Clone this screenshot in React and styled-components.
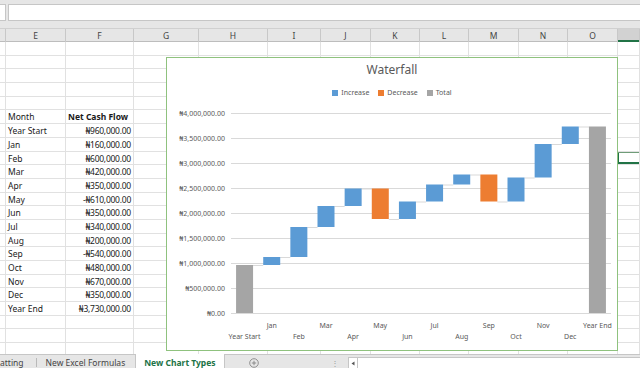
import React from 'react';
import styled, { createGlobalStyle } from 'styled-components';

const GlobalStyle = createGlobalStyle`
  html, body {
    margin: 0;
    padding: 0;
    background: #ffffff;
  }
  body {
    font-family: "Noto Sans", "Open Sans", sans-serif;
  }
`;

const COLUMNS = [
  { name: 'D', width: '6px' },
  { name: 'E', width: '60px' },
  { name: 'F', width: '68px' },
  { name: 'G', width: '65px' },
  { name: 'H', width: '69px' },
  { name: 'I', width: '53px' },
  { name: 'J', width: '50px' },
  { name: 'K', width: '49px' },
  { name: 'L', width: '49px' },
  { name: 'M', width: '50px' },
  { name: 'N', width: '49px' },
  { name: 'O', width: '50px' },
  { name: 'P', width: '1fr' },
];
const GRID = COLUMNS.map(c => c.width).join(' ');

const ROW_COUNT = 23;
const TABLE_ROW = 5;
const SELECTED_ROW = 8;

const FLOWS = [
  { label: 'Year Start', value: 960000, total: true },
  { label: 'Jan', value: 160000 },
  { label: 'Feb', value: 600000 },
  { label: 'Mar', value: 420000 },
  { label: 'Apr', value: 350000 },
  { label: 'May', value: -610000 },
  { label: 'Jun', value: 350000 },
  { label: 'Jul', value: 340000 },
  { label: 'Aug', value: 200000 },
  { label: 'Sep', value: -540000 },
  { label: 'Oct', value: 480000 },
  { label: 'Nov', value: 670000 },
  { label: 'Dec', value: 350000 },
  { label: 'Year End', value: 3730000, total: true },
];

const COLORS = {
  increase: '#5b9bd5',
  decrease: '#ed7d31',
  total: '#a5a5a5',
};

const naira = v =>
  (v < 0 ? '-' : '') +
  '₦' +
  Math.abs(v).toLocaleString('en-US', { minimumFractionDigits: 2, maximumFractionDigits: 2 });

// chart geometry, in svg units
const PLOT_LEFT = 64;
const PLOT_RIGHT = 444;
const ZERO_Y = 215;
const BAR_W = 17;
const STEP = (PLOT_RIGHT - PLOT_LEFT) / FLOWS.length;
const yOf = v => ZERO_Y - v / 20000;
const TICKS = [0, 500000, 1000000, 1500000, 2000000, 2500000, 3000000, 3500000, 4000000];

let running = 0;
const BARS = FLOWS.map((f, i) => {
  let from, to, kind;
  if (f.total) {
    from = 0;
    to = f.value;
    running = f.value;
    kind = 'total';
  } else {
    from = running;
    to = running + f.value;
    running = to;
    kind = f.value >= 0 ? 'increase' : 'decrease';
  }
  return {
    ...f,
    kind,
    end: running,
    x: PLOT_LEFT + i * STEP + (STEP - BAR_W) / 2,
    top: yOf(Math.max(from, to)),
    height: Math.abs(to - from) / 20000,
  };
});

const Window = styled.div`
  width: 640px;
  height: 368px;
  overflow: hidden;
  display: flex;
  flex-direction: column;
  background: #ffffff;
`;

const FormulaArea = styled.div`
  height: 28px;
  flex: none;
  box-sizing: border-box;
  padding-top: 4px;
  display: flex;
  align-items: flex-start;
  gap: 2px;
  background: #e6e6e6;
`;

const NameStub = styled.div`
  width: 6px;
  height: 17px;
  box-sizing: border-box;
  background: #ffffff;
  border: 1px solid #c6c6c6;
  border-left: none;
`;

const FormulaInput = styled.div`
  flex: 1;
  height: 17px;
  box-sizing: border-box;
  background: #ffffff;
  border: 1px solid #c6c6c6;
  border-right: none;
`;

const HeaderRow = styled.div`
  height: 14px;
  flex: none;
  box-sizing: border-box;
  display: grid;
  grid-template-columns: ${GRID};
  background: #e6e6e6;
  border-top: 1px solid #d0d0d0;
  border-bottom: 1px solid #bdbdbd;
`;

const ColHeader = styled.div`
  box-sizing: border-box;
  border-right: 1px solid #c8c8c8;
  font-size: 8.5px;
  line-height: 13px;
  color: #444444;
  text-align: center;
  background: ${p => (p.$selected ? '#d2d2d2' : 'transparent')};
  box-shadow: ${p => (p.$selected ? 'inset 0 -2px 0 #217346' : 'none')};
`;

const Sheet = styled.div`
  position: relative;
  flex: 1;
  overflow: hidden;
`;

const Row = styled.div`
  height: 13.7px;
  display: grid;
  grid-template-columns: ${GRID};
`;

const Cell = styled.div`
  box-sizing: border-box;
  border-right: 1px solid #e1e1e1;
  border-bottom: 1px solid #e1e1e1;
  padding: 1px ${p => (p.$align === 'right' ? '2px' : '1px')} 0 ${p => (p.$align === 'right' ? '0' : '2px')};
  font-size: 8.5px;
  line-height: 12.7px;
  color: #1a1a1a;
  white-space: nowrap;
  overflow: hidden;
  text-align: ${p => p.$align || 'left'};
  font-weight: ${p => (p.$bold ? 700 : 400)};
  letter-spacing: ${p => (p.$numeric ? '-0.25px' : '0')};
  box-shadow: ${p => (p.$selected ? 'inset 0 1px 0 #6f9c78, inset 0 -2px 0 #217346, inset 1px 0 0 #217346' : 'none')};
`;

const ChartBox = styled.div`
  position: absolute;
  left: 166px;
  top: 15px;
  width: 452px;
  height: 294px;
  box-sizing: border-box;
  border: 1px solid #8fc27e;
  background: #ffffff;
  display: flex;
  flex-direction: column;
`;

const ChartTitle = styled.div`
  margin-top: 4px;
  font-size: 12px;
  line-height: 16px;
  color: #595959;
  text-align: center;
`;

const Legend = styled.div`
  margin-top: 10px;
  height: 10px;
  display: flex;
  justify-content: center;
  align-items: center;
  gap: 9px;
`;

const LegendItem = styled.div`
  display: flex;
  align-items: center;
  gap: 3px;
  font-size: 7px;
  line-height: 10px;
  color: #595959;
`;

const Swatch = styled.span`
  width: 6px;
  height: 6px;
  background: ${p => p.$color};
`;

const Plot = styled.svg`
  display: block;
  flex: none;
  font-family: "Noto Sans", "Open Sans", sans-serif;
`;

const TabBar = styled.div`
  height: 14px;
  flex: none;
  box-sizing: border-box;
  display: flex;
  align-items: stretch;
  background: #e6e6e6;
  border-top: 1px solid #c6c6c6;
  font-size: 8.5px;
  color: #444444;
`;

const Tab = styled.div`
  display: flex;
  align-items: center;
  padding-top: 2px;
  white-space: nowrap;
  padding-right: ${p => p.$right || 10}px;
  padding-left: ${p => p.$left || 0}px;
  margin-top: ${p => (p.$active ? '-1px' : '0')};
  background: ${p => (p.$active ? '#ffffff' : 'transparent')};
  color: ${p => (p.$active ? '#217346' : '#444444')};
  font-weight: ${p => (p.$active ? 700 : 400)};
  border-left: ${p => (p.$active ? '1px solid #c6c6c6' : 'none')};
  border-right: ${p => (p.$active ? '1px solid #c6c6c6' : 'none')};
`;

const TabDivider = styled.span`
  width: 1px;
  height: 9px;
  align-self: center;
  margin-top: 2px;
  background: #b9b9b9;
`;

const AddSheet = styled.svg`
  align-self: center;
  margin-top: 2px;
  margin-left: 24px;
`;

const Dots = styled.span`
  align-self: center;
  margin-top: 2px;
  margin-left: 72px;
  font-size: 8px;
  line-height: 10px;
  color: #9a9a9a;
`;

const ScrollArrow = styled.div`
  margin-left: 9px;
  margin-top: 2px;
  width: 10px;
  box-sizing: border-box;
  background: #ffffff;
  border: 1px solid #c6c6c6;
  border-bottom: none;
  display: flex;
  align-items: center;
  justify-content: center;
`;

const ScrollTrack = styled.div`
  flex: 1;
  margin-top: 2px;
  background: #ffffff;
  border-top: 1px solid #c6c6c6;
`;

function cellFor(r, col) {
  const item = r === TABLE_ROW ? null : FLOWS[r - TABLE_ROW - 1];
  if (r === TABLE_ROW) {
    if (col === 'E') return { text: 'Month' };
    if (col === 'F') return { text: 'Net Cash Flow', bold: true };
  } else if (item) {
    if (col === 'E') return { text: item.label };
    if (col === 'F') return { text: naira(item.value), align: 'right', numeric: true };
  }
  return { text: null };
}

function WaterfallChart() {
  return (
    <ChartBox>
      <ChartTitle>Waterfall</ChartTitle>
      <Legend>
        <LegendItem><Swatch $color={COLORS.increase} />Increase</LegendItem>
        <LegendItem><Swatch $color={COLORS.decrease} />Decrease</LegendItem>
        <LegendItem><Swatch $color={COLORS.total} />Total</LegendItem>
      </Legend>
      <Plot width="450" height="252" viewBox="0 0 450 252">
        {TICKS.map(t => (
          <g key={t}>
            <line x1={PLOT_LEFT} x2={PLOT_RIGHT} y1={yOf(t) + 0.5} y2={yOf(t) + 0.5} stroke="#d9d9d9" strokeWidth="1" />
            <text x="58" y={yOf(t) + 2.5} fontSize="7" fill="#595959" textAnchor="end">{naira(t)}</text>
          </g>
        ))}
        {BARS.slice(0, -1).map((b, i) => (
          <line
            key={'c' + i}
            x1={b.x + BAR_W}
            x2={BARS[i + 1].x}
            y1={yOf(b.end) + 0.5}
            y2={yOf(b.end) + 0.5}
            stroke="#d9d9d9"
            strokeWidth="1"
          />
        ))}
        {BARS.map(b => (
          <rect key={b.label} x={b.x} y={b.top} width={BAR_W} height={b.height} fill={COLORS[b.kind]} />
        ))}
        {BARS.map((b, i) => (
          <text
            key={'l' + b.label}
            x={b.x + BAR_W / 2}
            y={i % 2 === 1 ? 229.5 : 240.5}
            fontSize="7"
            fill="#595959"
            textAnchor="middle"
          >
            {b.label}
          </text>
        ))}
      </Plot>
    </ChartBox>
  );
}

export default function App() {
  return (
    <>
      <GlobalStyle />
      <Window>
        <FormulaArea>
          <NameStub />
          <FormulaInput />
        </FormulaArea>
        <HeaderRow>
          {COLUMNS.map(c => (
            <ColHeader key={c.name} $selected={c.name === 'P'}>
              {c.name === 'D' || c.name === 'P' ? '' : c.name}
            </ColHeader>
          ))}
        </HeaderRow>
        <Sheet>
          {Array.from({ length: ROW_COUNT }, (_, r) => (
            <Row key={r}>
              {COLUMNS.map(c => {
                const cell = cellFor(r, c.name);
                return (
                  <Cell
                    key={c.name}
                    $align={cell.align}
                    $bold={cell.bold}
                    $numeric={cell.numeric}
                    $selected={c.name === 'P' && r === SELECTED_ROW}
                  >
                    {cell.text}
                  </Cell>
                );
              })}
            </Row>
          ))}
          <WaterfallChart />
        </Sheet>
        <TabBar>
          <Tab $right={12}>atting</Tab>
          <TabDivider />
          <Tab $left={9} $right={10}>New Excel Formulas</Tab>
          <Tab $active $left={8} $right={8}>New Chart Types</Tab>
          <AddSheet width="10" height="10" viewBox="0 0 10 10">
            <circle cx="5" cy="5" r="4.3" fill="none" stroke="#7a7a7a" strokeWidth="0.8" />
            <path d="M5 2.8v4.4M2.8 5h4.4" stroke="#7a7a7a" strokeWidth="0.8" />
          </AddSheet>
          <Dots>⋮</Dots>
          <ScrollArrow>
            <svg width="4" height="5" viewBox="0 0 4 5">
              <path d="M3.5 0.5L0.5 2.5L3.5 4.5Z" fill="#555555" />
            </svg>
          </ScrollArrow>
          <ScrollTrack />
        </TabBar>
      </Window>
    </>
  );
}
